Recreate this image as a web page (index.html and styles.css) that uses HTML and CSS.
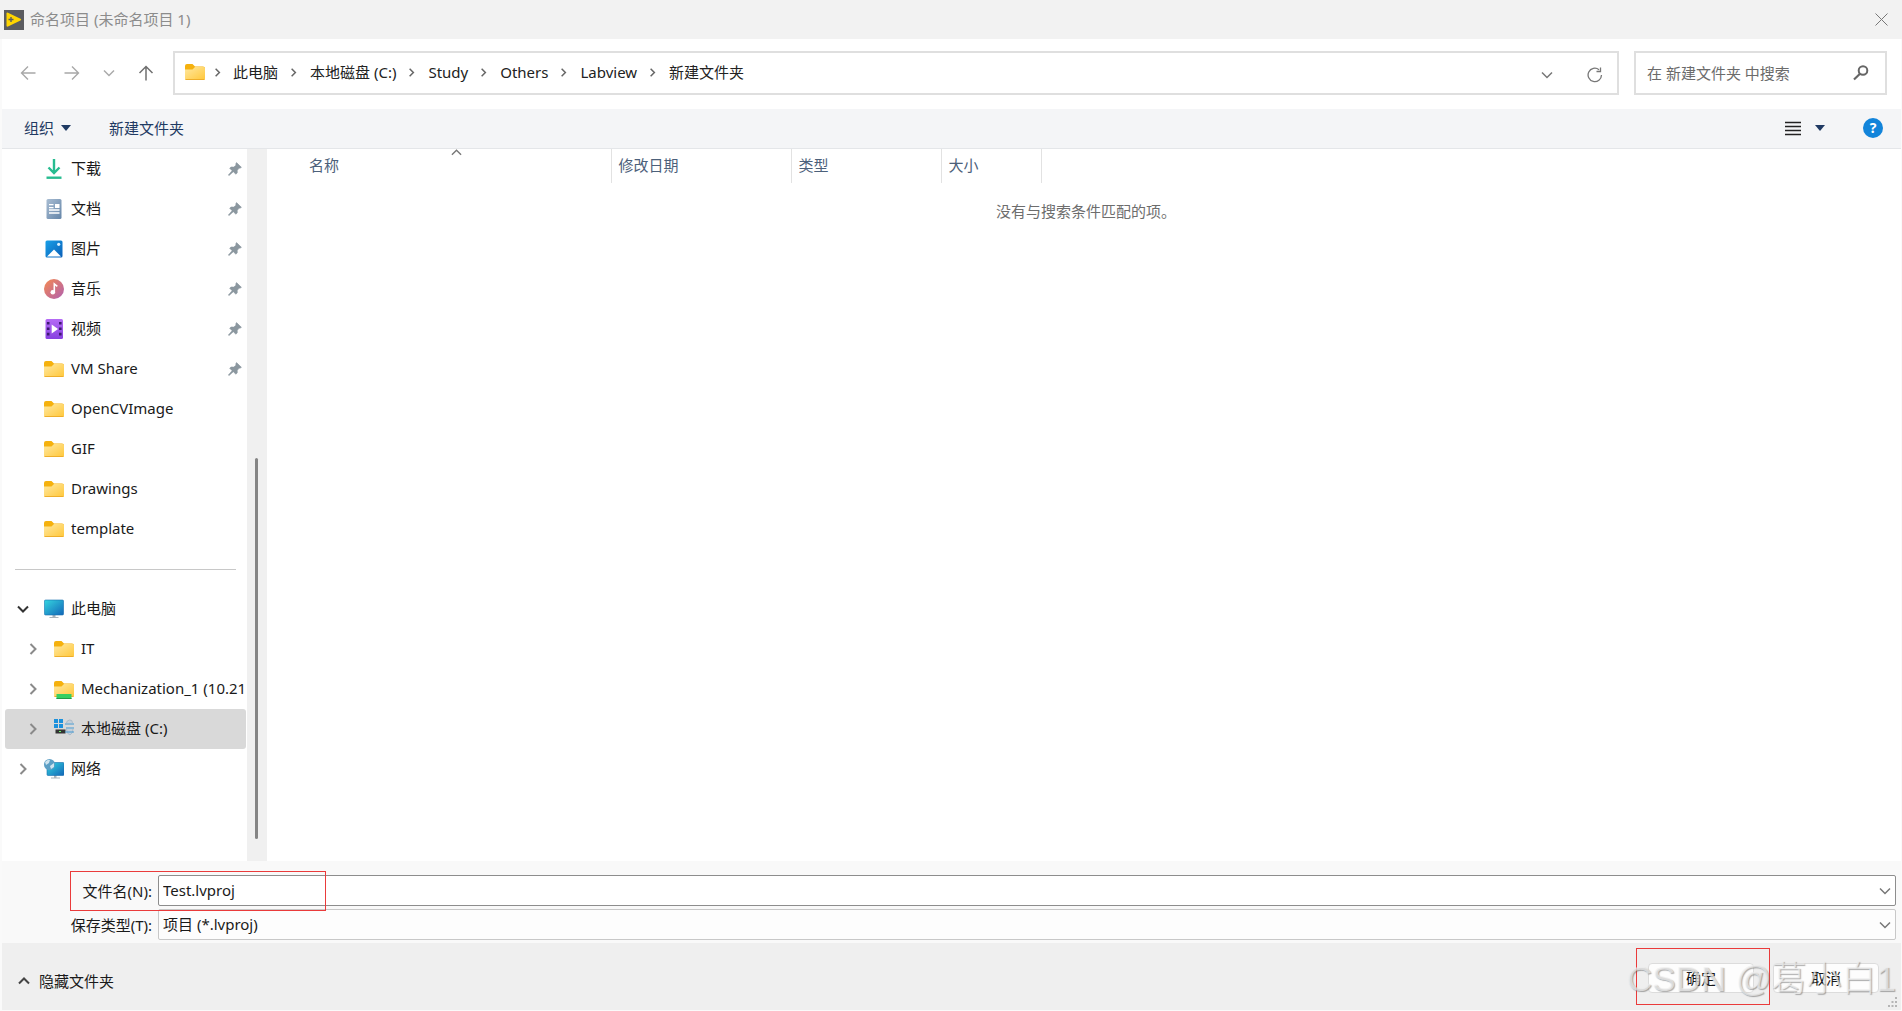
FILE: index.html
```html
<!DOCTYPE html>
<html lang="zh-CN">
<head>
    <meta charset="utf-8">
    <title>命名项目 (未命名项目 1)</title>
    <link rel="stylesheet" href="styles.css">
</head>
<body>
    <!-- shared icons -->
    <svg class="sprite" width="0" height="0">
        <defs>
            <linearGradient id="gFolder" x1="0" y1="0" x2="1" y2="1"><stop offset="0" stop-color="#ffe8a0"/><stop offset="1" stop-color="#ffc73a"/></linearGradient>
            <linearGradient id="gScreen" x1="0" y1="0" x2="1" y2="1"><stop offset="0" stop-color="#35d6e0"/><stop offset="1" stop-color="#1266b8"/></linearGradient>
            <linearGradient id="gDoc" x1="0" y1="0" x2="1" y2="1"><stop offset="0" stop-color="#a9bdd3"/><stop offset="1" stop-color="#6485a8"/></linearGradient>
            <linearGradient id="gPic" x1="0" y1="0" x2="1" y2="1"><stop offset="0" stop-color="#18a0e8"/><stop offset="1" stop-color="#0a5fb8"/></linearGradient>
            <linearGradient id="gMusic" x1="0" y1="0" x2="1" y2="1"><stop offset="0" stop-color="#f58a50"/><stop offset="1" stop-color="#b05fb0"/></linearGradient>
            <linearGradient id="gVideo" x1="0" y1="0" x2="0" y2="1"><stop offset="0" stop-color="#b56bf5"/><stop offset="1" stop-color="#8740e0"/></linearGradient>
        </defs>
        <symbol id="folder" viewBox="0 0 20 20">
            <path d="M0 4a2 2 0 0 1 2-2h5.500l2.500 2.500h8a2 2 0 0 1 2 2V10H0z" fill="#f5b10e"/>
            <path d="M0 7.500h7.500L10 5h8.500A1.500 1.500 0 0 1 20 6.500v10a1.500 1.500 0 0 1-1.500 1.500h-17A1.500 1.500 0 0 1 0 16.500z" fill="url(#gFolder)"/>
            <path d="M.5 17.500h19" stroke="#eeae2b"/>
        </symbol>
        <symbol id="chev" viewBox="0 0 12 12"><path d="M1 3.500l5 5 5-5" fill="none" stroke="currentColor" stroke-width="1.500"/></symbol>
        <symbol id="chevR" viewBox="0 0 12 12"><path d="M3.500 1l5 5-5 5" fill="none" stroke="currentColor" stroke-width="2"/></symbol>
        <symbol id="pin" viewBox="0 0 14 14"><path d="M8.500.6l4.900 4.700-1.400.9-.8-.1-1.900 2.200-.1 2.700-1.300 1.200-2.600-2.500L1 13.600l-.6-.5 3.700-4.400L1.700 6.200 3 5l2.800.1L8 3.200l-.2-1.300z" fill="#8b979f" stroke="#8b979f" stroke-width=".6"/></symbol>
        <symbol id="pc" viewBox="0 0 20 20">
            <path d="M8.500 15h3v3h3v1h-9v-1h3z" fill="#a9b3bb"/>
            <rect x=".4" y="1" width="19.200" height="15" rx="1.200" fill="url(#gScreen)" stroke="#166fae" stroke-width=".6"/>
        </symbol>
    </svg>

    <header class="titlebar">
        <svg class="app-icon" viewBox="0 0 20 20"><rect width="20" height="20" fill="#5b5c60"/><path d="M2.500 3.500Q2.500 2 4 2.700l12.500 6q1.500.9 0 1.700L4 16.600q-1.500.6-1.500-1z" fill="#ffd500"/><path d="M4.500 9.500h5M7 7v5" stroke="#5b5c60" stroke-width="1.400"/></svg>
        <span class="title">命名项目 (未命名项目 1)</span>
        <button class="icon-btn close" aria-label="关闭"><svg width="13" height="13" viewBox="0 0 13 13"><path d="M.5.500l12 12M12.500.500l-12 12" stroke="#777" fill="none"/></svg></button>
    </header>

    <div class="navbar">
        <div class="nav-btns">
            <button class="icon-btn back" aria-label="后退"><svg width="16" height="16" viewBox="0 0 16 16"><path d="M15.500 8H1.500M8 1.500L1.500 8 8 14.500" fill="none" stroke="#a8a8a8" stroke-width="1.400"/></svg></button>
            <button class="icon-btn" aria-label="前进"><svg width="16" height="16" viewBox="0 0 16 16"><path d="M.5 8h14M8 1.500L14.500 8 8 14.500" fill="none" stroke="#a8a8a8" stroke-width="1.400"/></svg></button>
            <button class="icon-btn recent" aria-label="最近"><svg width="12" height="12"><use href="#chev"/></svg></button>
            <button class="icon-btn" aria-label="上移"><svg width="16" height="16" viewBox="0 0 16 16"><path d="M8 15.500V1.500M1.500 8L8 1.500 14.500 8" fill="none" stroke="#707070" stroke-width="1.500"/></svg></button>
        </div>
        <nav class="address">
            <svg class="icon"><use href="#folder"/></svg>
            <svg class="sep"><use href="#chevR"/></svg>
            <a href="#">此电脑</a>
            <svg class="sep"><use href="#chevR"/></svg>
            <a href="#">本地磁盘 (C:)</a>
            <svg class="sep"><use href="#chevR"/></svg>
            <a href="#">Study</a>
            <svg class="sep"><use href="#chevR"/></svg>
            <a href="#">Others</a>
            <svg class="sep"><use href="#chevR"/></svg>
            <a href="#">Labview</a>
            <svg class="sep"><use href="#chevR"/></svg>
            <a href="#">新建文件夹</a>
            <div class="address-btns">
                <button class="icon-btn" aria-label="历史"><svg width="12" height="12"><use href="#chev"/></svg></button>
                <button class="icon-btn" aria-label="刷新"><svg width="16" height="16" viewBox="0 0 16 16"><path d="M14.500 8A6.700 6.700 0 1 1 12 2.700M9.500 4.500h4V.5" fill="none" stroke="#777" stroke-width="1.300"/></svg></button>
            </div>
        </nav>
        <div class="search">
            <input type="text" placeholder="在 新建文件夹 中搜索" aria-label="搜索">
            <svg width="16" height="16" viewBox="0 0 16 16"><circle cx="10" cy="5.500" r="4.300" fill="none" stroke="#666" stroke-width="2"/><path d="M7 8.700L1 14.500" stroke="#666" stroke-width="2.200"/></svg>
        </div>
    </div>

    <div class="toolbar">
        <button>组织 <svg class="tri" viewBox="0 0 10 6"><path d="M0 0h10L5 6z"/></svg></button>
        <button>新建文件夹</button>
        <div class="view-btns">
            <button class="icon-btn" aria-label="视图"><svg width="16" height="16" viewBox="0 0 16 16"><path d="M0 2.500h16M0 6.500h16M0 10.500h16M0 14.500h16" stroke="#222" stroke-width="1.400"/></svg></button>
            <button class="icon-btn" aria-label="更多"><svg class="tri" viewBox="0 0 10 6"><path d="M0 0h10L5 6z"/></svg></button>
            <button class="help" aria-label="帮助">?</button>
        </div>
    </div>

    <main class="content">
        <aside class="sidebar">
            <ul class="tree">
                <li><svg class="icon" viewBox="0 0 20 20"><path d="M10 0v14M4.500 8.500l5.500 5.500 5.500-5.500" fill="none" stroke="#27bc90" stroke-width="2.400"/><path d="M2.500 18.700h15" stroke="#27bc90" stroke-width="2.400"/></svg><span>下载</span><svg class="pin"><use href="#pin"/></svg></li>
                <li><svg class="icon" viewBox="0 0 20 20"><rect x="2.500" width="15" height="20" rx="1.500" fill="url(#gDoc)"/><path d="M5 5.700h4.500M5 8.700h4.500M5 11h10.500M5 14h10.500" stroke="#fff" stroke-width="1.300"/><rect x="11" y="5" width="4.500" height="4" fill="#fff"/></svg><span>文档</span><svg class="pin"><use href="#pin"/></svg></li>
                <li><svg class="icon" viewBox="0 0 20 20"><rect x="1.500" y="1.500" width="17" height="17" rx="1.500" fill="url(#gPic)"/><path d="M3 17.500l7-7 7 7z" fill="#fff"/><circle cx="14.700" cy="5.300" r="1.600" fill="#d8f0ff"/></svg><span>图片</span><svg class="pin"><use href="#pin"/></svg></li>
                <li><svg class="icon" viewBox="0 0 20 20"><circle cx="10" cy="10" r="10" fill="url(#gMusic)"/><circle cx="8.800" cy="13.300" r="2.300" fill="#fff"/><path d="M10.300 13.500V5l3 2.400" fill="none" stroke="#fff" stroke-width="1.600"/></svg><span>音乐</span><svg class="pin"><use href="#pin"/></svg></li>
                <li><svg class="icon" viewBox="0 0 20 20"><rect x="1.500" width="17.500" height="20" rx="1.500" fill="url(#gVideo)"/><path d="M4.200 3v14M16.300 3v14" stroke="#3d1a70" stroke-width="2.600" stroke-dasharray="2.600 2.800"/><path d="M7.700 5.500v9l6.300-4.500z" fill="#fff"/></svg><span>视频</span><svg class="pin"><use href="#pin"/></svg></li>
                <li><svg class="icon"><use href="#folder"/></svg><span>VM Share</span><svg class="pin"><use href="#pin"/></svg></li>
                <li><svg class="icon"><use href="#folder"/></svg><span>OpenCVImage</span></li>
                <li><svg class="icon"><use href="#folder"/></svg><span>GIF</span></li>
                <li><svg class="icon"><use href="#folder"/></svg><span>Drawings</span></li>
                <li><svg class="icon"><use href="#folder"/></svg><span>template</span></li>
            </ul>
            <hr>
            <ul class="tree">
                <li class="root"><svg class="arrow open" viewBox="0 0 12 12"><path d="M1 3.500l5 5 5-5" fill="none" stroke="currentColor" stroke-width="2"/></svg><svg class="icon"><use href="#pc"/></svg><span>此电脑</span></li>
                <li class="child"><svg class="arrow"><use href="#chevR"/></svg><svg class="icon"><use href="#folder"/></svg><span>IT</span></li>
                <li class="child"><svg class="arrow"><use href="#chevR"/></svg><svg class="icon" viewBox="0 0 20 20"><use href="#folder" width="20" height="20"/><rect x="2.500" y="15" width="15" height="5" fill="#35cf62"/><path d="M2.500 19.500h15" stroke="#1f9c48"/></svg><span>Mechanization_1 (10.21</span></li>
                <li class="child selected"><svg class="arrow"><use href="#chevR"/></svg><svg class="icon" viewBox="0 0 20 20"><path d="M0 0h4v4H0zM5 0h4v4H5zM0 5h4v4H0zM5 5h4v4H5z" fill="#1c91dc"/><path d="M1.500 10.500h10v4h-10z" fill="#333"/><path d="M5 12.500h2" stroke="#6f6"/><path d="M12.500 4q0-2.500 3-3t3 3M12.500 10q0 5 3.500 6 3-1.500 3-6" fill="#c5d0da" stroke="#aebcc9"/><path d="M11 5h9M12 9h8M11 13h9" stroke="#4599d2"/></svg><span>本地磁盘 (C:)</span></li>
                <li class="root"><svg class="arrow"><use href="#chevR"/></svg><svg class="icon" viewBox="0 0 20 20"><path d="M10 16h2.500v2.500H16v1H7v-1h3z" fill="#a9b3bb"/><rect x="3" y="3.500" width="17" height="13" rx="1" fill="url(#gScreen)" stroke="#166fae" stroke-width=".6"/><circle cx="5.500" cy="5.500" r="5.500" fill="#5c9fc5"/><path d="M1 3q3-3 5-2L5 4 2 6zM6 7l4-3v4l-3 2z" fill="#cfe4ef"/></svg><span>网络</span></li>
            </ul>
        </aside>
        <div class="scrollbar"><div class="thumb"></div></div>
        <section class="files">
            <table>
                <thead>
                    <tr>
                        <th class="col-name">名称<svg class="sort" viewBox="0 0 12 12"><path d="M1 8.500l5-5 5 5" fill="none" stroke="#777" stroke-width="1.500"/></svg></th>
                        <th class="col-date">修改日期</th>
                        <th class="col-type">类型</th>
                        <th class="col-size">大小</th>
                    </tr>
                </thead>
            </table>
            <p class="empty">没有与搜索条件匹配的项。</p>
        </section>
    </main>

    <form class="fields">
        <label for="fname">文件名(N):</label>
        <div class="combo">
            <input id="fname" type="text" value="Test.lvproj">
            <svg class="drop"><use href="#chev"/></svg>
        </div>
        <label for="ftype">保存类型(T):</label>
        <div class="combo">
            <select id="ftype"><option>项目 (*.lvproj)</option></select>
            <svg class="drop"><use href="#chev"/></svg>
        </div>
        <div class="mark mark-name"></div>
    </form>

    <footer class="footer">
        <button class="hide-folders"><svg width="12" height="12" viewBox="0 0 12 12"><path d="M1 8.500l5-5 5 5" fill="none" stroke="#444" stroke-width="2"/></svg>隐藏文件夹</button>
        <button class="btn">确定</button>
        <button class="btn">取消</button>
        <div class="mark mark-ok"></div>
        <div class="watermark">CSDN @葛小白1</div>
        <svg class="grip" viewBox="0 0 10 10"><path d="M7 0h2v2H7zM3.500 4h2v2h-2zM7 4h2v2H7zM0 8h2v2H0zM3.500 8h2v2h-2zM7 8h2v2H7z" fill="#b5b5b5"/></svg>
    </footer>
</body>
</html>
```
FILE: styles.css
```css
*{
    box-sizing: border-box;
}
body{
    margin: 0;
    padding: 0 1px 1px 2px;
    height: 100vh;
    display: flex;
    flex-direction: column;
    background-color: #fafafa;
    color: #1a1a1a;
    font-family: "Noto Sans", "Noto Sans CJK SC", sans-serif;
    font-size: 15px;
    line-height: 20px;
    overflow: hidden;
}
button, input, select{
    font: inherit;
    color: inherit;
    border: none;
    background: none;
    padding: 0;
}
svg{
    display: block;
    flex-shrink: 0;
}
.sprite{
    position: absolute;
}
.icon{
    width: 20px;
    height: 20px;
}
.icon-btn{
    display: flex;
    align-items: center;
    justify-content: center;
    color: #777;
}

/*=======Title=======*/
.titlebar{
    display: flex;
    align-items: center;
    gap: 6px;
    height: 39px;
    margin: 0 -1px 0 -2px;
    padding: 0 14px 0 4px;
    background-color: #f2f2f2;
    color: #8c8c8c;
}
.title{
    padding-bottom: 2px;
}
.app-icon{
    width: 20px;
    height: 20px;
}
.close{
    margin-left: auto;
}

/*=======Address bar=======*/
.navbar{
    display: flex;
    align-items: center;
    height: 70px;
    padding: 0 14px 2px 18px;
    background-color: #fff;
}
.nav-btns{
    display: flex;
    gap: 23px;
    width: 153px;
}
.nav-btns .back{
    margin-right: 5px;
}
.nav-btns .recent{
    color: #aaa;
}
.address{
    display: flex;
    align-items: center;
    flex: 1;
    height: 44px;
    padding: 0 14px 2px 10px;
    border: 2px solid #dfdfdf;
}
.address a{
    color: #222;
    text-decoration: none;
}
.sep{
    width: 9px;
    height: 9px;
    margin: 0 12px 0 11px;
    color: #666;
}
.icon + .sep{
    margin: 0 11px 0 8px;
}
.address-btns{
    display: flex;
    gap: 34px;
    margin-left: auto;
    padding-top: 6px;
}
.search{
    display: flex;
    align-items: center;
    width: 253px;
    height: 44px;
    margin-left: 15px;
    padding: 0 16px 0 11px;
    border: 2px solid #dfdfdf;
}
.search input{
    flex: 1;
    min-width: 0;
    outline: none;
}
.search input::placeholder{
    color: #6b6b6b;
}

/*=======Toolbar=======*/
.toolbar{
    display: flex;
    align-items: center;
    gap: 38px;
    height: 40px;
    padding: 0 18px 2px 22px;
    background-color: #f4f5f7;
    border-bottom: 1px solid #e4e6e9;
    color: #1f3a63;
}
.toolbar button{
    display: flex;
    align-items: center;
    gap: 7px;
}
.tri{
    width: 10px;
    height: 6px;
    fill: #1f3a63;
}
.view-btns{
    display: flex;
    align-items: center;
    gap: 14px;
    margin-left: auto;
}
.toolbar .help{
    justify-content: center;
    width: 20px;
    height: 20px;
    margin-left: 24px;
    border-radius: 50%;
    background-color: #1284da;
    color: #fff;
    font-size: 14px;
    font-weight: bold;
}

/*=======Content=======*/
.content{
    display: flex;
    flex: 1;
    min-height: 0;
    background-color: #fff;
}
.sidebar{
    width: 245px;
    overflow: hidden;
}
.tree{
    list-style: none;
    margin: 0;
    padding: 0 1px 0 3px;
}
.tree li{
    display: flex;
    align-items: center;
    gap: 7px;
    height: 40px;
    padding-left: 39px;
    white-space: nowrap;
}
.tree span{
    padding-bottom: 2px;
}
.tree .pin{
    width: 14px;
    height: 14px;
    margin: 0 4px 0 auto;
}
.arrow{
    width: 12px;
    height: 12px;
    color: #8a8a8a;
}
.arrow.open{
    color: #333;
}
.tree .root{
    padding-left: 12px;
}
.tree .child{
    padding-left: 22px;
}
.tree .arrow{
    margin-right: 8px;
}
.tree .selected{
    background-color: #d9d9d9;
    border-radius: 3px;
}
.sidebar hr{
    height: 1px;
    margin: 20px 11px 19px 13px;
    border: none;
    background-color: #c8c8c8;
}
.scrollbar{
    display: flex;
    flex-direction: column;
    align-items: center;
    width: 20px;
    padding: 309px 1px 22px 0;
    background-color: #f0f0f0;
}
.thumb{
    flex: 1;
    width: 3px;
    border-radius: 2px;
    background-color: #858585;
}
.files{
    flex: 1;
}
.files table{
    border-collapse: collapse;
    table-layout: fixed;
    width: 774px;
    color: #4c607a;
}
.files th{
    position: relative;
    height: 34px;
    padding: 0 0 2px 7px;
    border-right: 1px solid #e2e2e2;
    font-weight: normal;
    text-align: left;
}
.files .col-name{
    width: 344px;
    padding-left: 42px;
}
.col-date{
    width: 180px;
}
.col-type{
    width: 150px;
}
.col-size{
    width: 100px;
}
.sort{
    position: absolute;
    top: -2px;
    left: 184px;
    width: 11px;
    height: 11px;
}
.empty{
    margin: 18px 0 0;
    padding-left: 4px;
    text-align: center;
    color: #6d6d6d;
}

/*=======File name=======*/
.fields{
    position: relative;
    display: grid;
    grid-template-columns: 150px 1fr;
    column-gap: 6px;
    row-gap: 3px;
    align-items: center;
    padding: 14px 5px 3px 0;
    background-color: #f9f9f9;
}
.fields label{
    text-align: right;
}
.combo{
    position: relative;
    height: 31px;
}
.combo input, .combo select{
    display: block;
    width: 100%;
    height: 31px;
    padding: 0 30px 2px 4px;
    border: 1px solid #8d8d8d;
    border-radius: 2px;
    background-color: #fff;
    outline: none;
}
.combo select{
    appearance: none;
    border-color: #c8c8c8;
    background-color: #fdfdfd;
}
.drop{
    position: absolute;
    top: 10px;
    right: 5px;
    width: 12px;
    height: 12px;
    color: #777;
}
.mark{
    position: absolute;
    border: 1px solid #ea3b3b;
    pointer-events: none;
}
.mark-name{
    top: 10px;
    left: 68px;
    width: 256px;
    height: 40px;
}

/*=======Footer=======*/
.footer{
    position: relative;
    display: flex;
    align-items: center;
    gap: 19px;
    height: 67px;
    padding: 3px 22px 0 16px;
    background-color: #efefef;
}
.hide-folders{
    display: flex;
    align-items: center;
    gap: 9px;
    margin-right: auto;
    padding-top: 6px;
}
.btn{
    width: 106px;
    height: 30px;
    border: 1px solid #dcdcdc;
    border-radius: 4px;
    background-color: #fdfdfd;
}
.mark-ok{
    top: 5px;
    right: 131px;
    width: 134px;
    height: 57px;
}
.watermark{
    position: absolute;
    right: 5px;
    top: 14px;
    font-family: "Liberation Sans", "Noto Sans CJK SC", sans-serif;
    font-size: 35px;
    font-weight: 300;
    line-height: 44px;
    white-space: nowrap;
    color: rgba(240, 240, 240, 0.7);
    text-shadow: 1px 1px 1px rgba(90, 90, 90, 0.5);
    pointer-events: none;
}
.grip{
    position: absolute;
    right: 3px;
    bottom: 3px;
    width: 10px;
    height: 10px;
}
```
